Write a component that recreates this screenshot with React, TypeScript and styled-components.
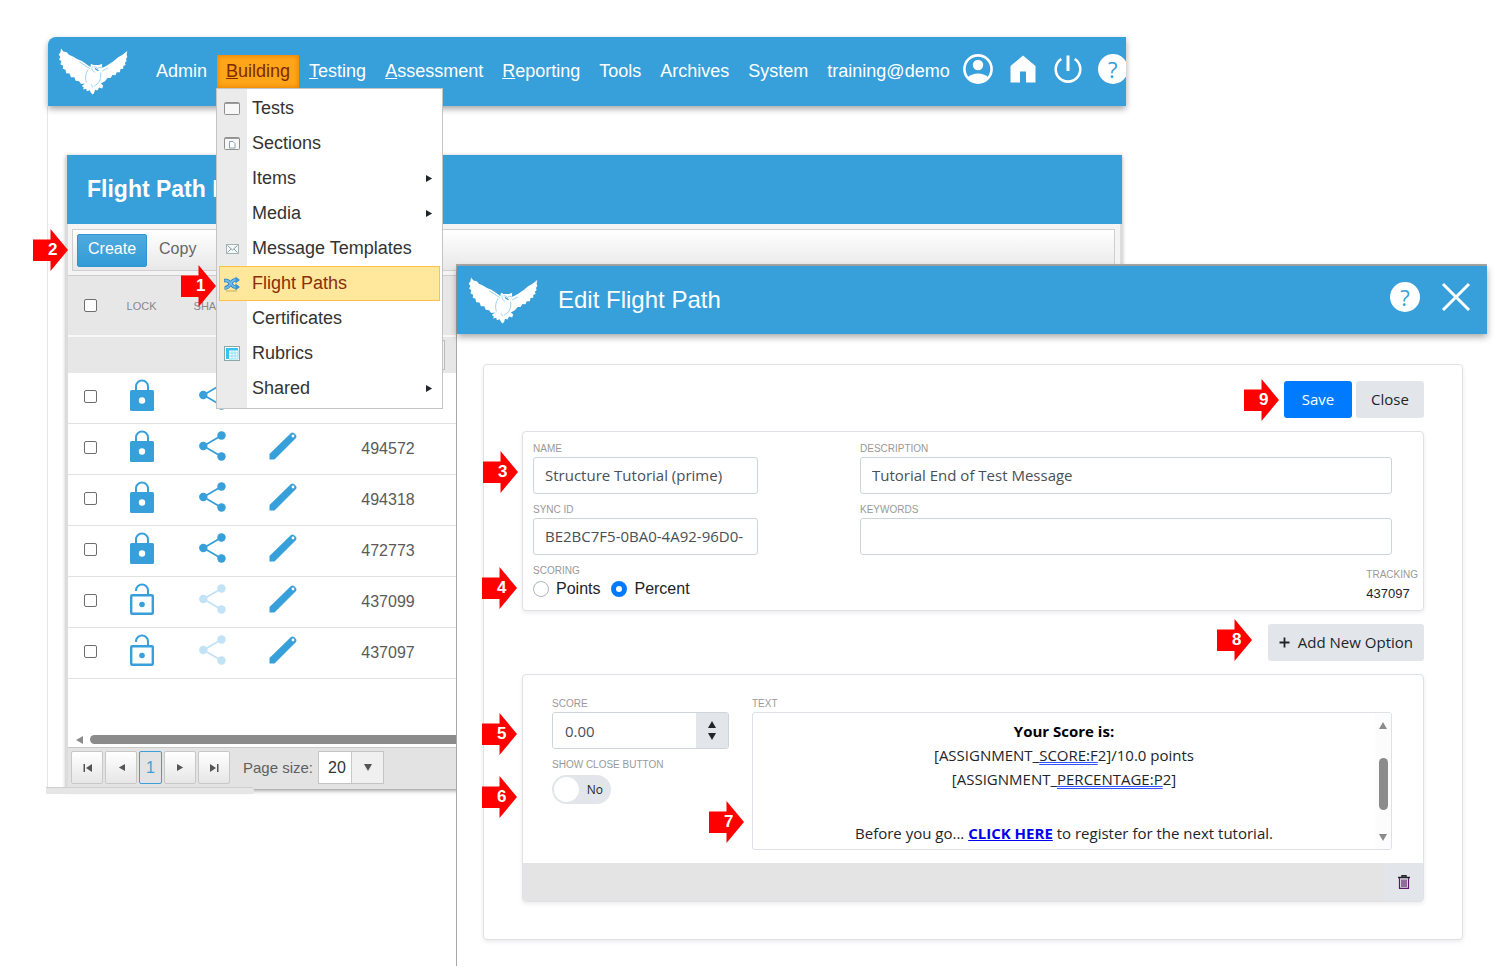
import React, { useState } from "react";
import styled, { createGlobalStyle, css } from "styled-components";

const BLUE = "#379fd9";
const ARIAL = `"Liberation Sans", Arial, sans-serif`;
const UI = `"Open Sans", "Noto Sans", sans-serif`;

const GlobalStyle = createGlobalStyle`
  *, *::before, *::after { box-sizing: border-box; }
  body { margin: 0; background: #fff; font-family: ${ARIAL}; color: #212529; }
  button, input, select { font: inherit; color: inherit; margin: 0; }
  button { cursor: pointer; }
`;

/* ---------- desktop ---------- */

const Desktop = styled.div`
  position: relative;
  min-height: 100vh;
  overflow: hidden;
`;

const MainWindow = styled.section`
  position: relative;
  margin: 37px 374px 0 48px;
`;

const TopBar = styled.header`
  position: relative;
  z-index: 2;
  display: flex;
  align-items: flex-start;
  height: 69px;
  padding: 11px 0 0 10px;
  background: ${BLUE};
  border-radius: 8px 0 0 0;
  box-shadow: 0 3px 6px rgba(0, 0, 0, 0.35);
`;

const Nav = styled.nav`
  display: flex;
  flex: none;
  gap: 1px;
  margin: 7px 0 0 19px;
`;

const NavItem = styled.div`
  position: relative;
`;

const NavLink = styled.a<{ $active?: boolean }>`
  display: block;
  height: 33px;
  padding: 0 9px;
  font-size: 18px;
  line-height: 32px;
  color: #fff;
  text-decoration: none;
  white-space: nowrap;
  ${(p) =>
    p.$active &&
    css`
      color: #7a2c00;
      background: #ffa51a;
      box-shadow: inset 0 0 4px 1px #e88400;
    `}
`;

const BarIcons = styled.div`
  display: flex;
  align-items: center;
  flex: 1;
  min-width: 0;
  gap: 15px;
  margin: 6px 0 0 4px;
  overflow: hidden;
`;

const IconButton = styled.button`
  flex: none;
  display: flex;
  align-items: center;
  justify-content: center;
  padding: 0;
  border: 0;
  background: none;
`;

const HelpButton = styled(IconButton)`
  width: 30px;
  height: 30px;
  border-radius: 50%;
  background: #fff;
  color: ${BLUE};
  font-family: "Open Sans", sans-serif;
  font-size: 22px;
  line-height: 30px;
`;

/* ---------- drop-down menu ---------- */

const Menu = styled.ul`
  position: absolute;
  top: 33px;
  left: -1px;
  width: 227px;
  margin: 0;
  padding: 2px;
  list-style: none;
  border: 1px solid #c4c4c4;
  background: linear-gradient(to right, #ebebeb 30px, #fff 30px);
`;

const MenuRow = styled.li<{ $active?: boolean }>`
  height: 35px;
  border: 1px solid ${(p) => (p.$active ? "#ffc04c" : "transparent")};
  background: ${(p) => (p.$active ? "#ffe79c" : "transparent")};
  a {
    display: flex;
    align-items: center;
    height: 33px;
    padding: 0 6px 0 3px;
    font-size: 18px;
    color: ${(p) => (p.$active ? "#8a2f0b" : "#333")};
    text-decoration: none;
    white-space: nowrap;
  }
`;

const MenuIcon = styled.span`
  display: flex;
  justify-content: center;
  align-items: center;
  flex: none;
  width: 18px;
  height: 18px;
  margin-right: 11px;
`;

const MenuText = styled.span`
  flex: 1;
`;

/* ---------- list panel ---------- */

const Content = styled.div`
  padding: 49px 4px 0 18px;
  box-shadow: -1px 0 0 #e6e6e6;
`;

const Panel = styled.section`
  border-left: 2px solid #dcdcdc;
  box-shadow: 0 1px 4px rgba(0, 0, 0, 0.35);
  background: #fff;
`;

const PanelTitle = styled.h1`
  height: 69px;
  margin: 0 0 0 -1px;
  padding: 0 20px;
  background: ${BLUE};
  color: #fff;
  font-size: 23px;
  line-height: 68px;
  white-space: nowrap;
`;

const Toolbar = styled.div`
  height: 52px;
  padding: 5px 5px 4px 4px;
  border-right: 2px solid #ddd;
  border-bottom: 1px solid #ccc;
  background: #f4f4f4;
`;

const ToolbarInner = styled.div`
  display: flex;
  align-items: center;
  gap: 1px;
  height: 42px;
  padding: 0 4px;
  border: 1px solid #cfcfcf;
  background: linear-gradient(#fff, #e8e8e8);
`;

const ToolButton = styled.button<{ $primary?: boolean }>`
  height: 33px;
  padding: 0 10px 2px;
  border: 1px solid ${(p) => (p.$primary ? "#2f95d0" : "transparent")};
  border-radius: 2px;
  background: ${(p) => (p.$primary ? "linear-gradient(#50abde, #329bd6)" : "none")};
  color: ${(p) => (p.$primary ? "#fff" : "#666")};
  font-size: 16px;
`;

const Grid = styled.table`
  width: 100%;
  table-layout: fixed;
  border-collapse: separate;
  border-spacing: 0;
  margin-bottom: 53px;
  col.check { width: 45px; }
  col.lock { width: 57px; }
  col.share { width: 85px; }
  col.edit { width: 56px; }
  col.id { width: 154px; }
  th, td { padding: 0; text-align: center; }
  thead th, thead td { background: #e7e7e7; }
  thead th {
    height: 61px;
    border-bottom: 2px solid #f8f8f8;
    color: #888;
    font-size: 11px;
    font-weight: 400;
  }
  thead td { height: 36px; }
  tbody td {
    height: 51px;
    border-bottom: 1px solid #e2e2e2;
    color: #5a5a5a;
    font-size: 16px;
  }
  svg { display: block; margin: 0 auto 6px; }
  tbody input { margin-bottom: 3px; }
`;

const RowCheck = styled.input`
  appearance: none;
  display: block;
  width: 13px;
  height: 13px;
  margin: 0 auto;
  border: 1px solid #6e6e6e;
  border-radius: 2px;
  background: #fff;
`;

const FilterInput = styled.input`
  width: 114px;
  height: 30px;
  border: 1px solid #bbb;
  background: #f2f2f2;
`;

const ScrollRow = styled.div`
  display: flex;
  align-items: center;
  gap: 7px;
  height: 15px;
  padding: 0 0 0 7px;
`;

const ScrollThumb = styled.div`
  flex: 1;
  height: 9px;
  border-radius: 5px;
  background: #8b8b8b;
`;

const Pager = styled.div`
  display: flex;
  align-items: center;
  gap: 2px;
  height: 43px;
  padding: 0 3px 2px;
  border-top: 1px solid #c8c8c8;
  border-bottom: 1px solid #b4b4b4;
  background: #e3e3e3;
  color: #606060;
  font-size: 15px;
`;

const PageButton = styled.button<{ $current?: boolean }>`
  display: flex;
  align-items: center;
  justify-content: center;
  width: ${(p) => (p.$current ? "23px" : "32px")};
  height: 33px;
  padding: 0;
  border: 1px solid ${(p) => (p.$current ? "#3c9fd8" : "#c8c8c8")};
  border-radius: 2px;
  background: ${(p) => (p.$current ? "#e3e3e3" : "linear-gradient(#fff, #e6e6e6)")};
  color: ${(p) => (p.$current ? "#3c9fd8" : "#555")};
  font-size: 16px;
`;

const PageSize = styled.label`
  display: flex;
  align-items: center;
  gap: 5px;
  margin-left: 11px;
  white-space: nowrap;
`;

const SelectBox = styled.span`
  position: relative;
  display: block;
  select {
    appearance: none;
    width: 66px;
    height: 33px;
    padding: 0 0 0 9px;
    border: 1px solid #c4c4c4;
    border-radius: 0;
    background: linear-gradient(to right, #fff 32px, #c8c8c8 32px, #c8c8c8 33px, #f0f0f0 33px);
    color: #333;
    font-size: 16px;
  }
  svg {
    position: absolute;
    top: 13px;
    right: 12px;
    pointer-events: none;
  }
`;

const StatusStrip = styled.div`
  position: absolute;
  left: -2px;
  bottom: -4px;
  width: 208px;
  height: 7px;
  border-top: 1px solid #cfcfcf;
  border-radius: 0 3px 0 0;
  background: #e6e6e6;
`;

/* ---------- edit window ---------- */

const EditWindow = styled.section`
  position: absolute;
  z-index: 3;
  top: 264px;
  left: 456px;
  right: 13px;
  border-top: 2px solid #a8a8a8;
  border-left: 1px solid #a8a8a8;
  background: #fff;
`;

const EditHeader = styled.header`
  display: flex;
  align-items: center;
  height: 68px;
  padding: 0 16px 0 11px;
  background: ${BLUE};
  color: #fff;
  box-shadow: 0 3px 7px rgba(0, 0, 0, 0.35);
  h2 {
    flex: 1;
    margin: 0 0 0 20px;
    font-size: 24px;
    font-weight: 400;
  }
`;

const HeaderActions = styled.div`
  display: flex;
  align-items: center;
  gap: 21px;
  padding-bottom: 6px;
`;

const EditBody = styled.div`
  padding: 30px 24px 26px 26px;
`;

const cardLook = css`
  border: 1px solid #dee2e6;
  border-radius: 4px;
  background: #fff;
  box-shadow: 0 2px 4px rgba(0, 0, 0, 0.08);
`;

const OuterCard = styled.form`
  ${cardLook}
  display: flex;
  flex-direction: column;
  gap: 13px;
  padding: 16px 38px 37px;
`;

const Actions = styled.div`
  position: relative;
  display: flex;
  justify-content: flex-end;
  gap: 4px;
`;

const Button = styled.button<{ $primary?: boolean }>`
  display: flex;
  align-items: center;
  justify-content: center;
  gap: 8px;
  min-width: 68px;
  height: 37px;
  padding: 0 11px 1px;
  border: 0;
  border-radius: 3px;
  background: ${(p) => (p.$primary ? "#007bff" : "#e2e6ea")};
  color: ${(p) => (p.$primary ? "#fff" : "#212529")};
  font-family: ${UI};
  font-size: 15px;
  white-space: nowrap;
`;

const FormCard = styled.div`
  ${cardLook}
  padding: 11px 5px 8px 10px;
`;

const FieldGrid = styled.div`
  display: grid;
  grid-template-columns: 225px 1fr;
  column-gap: 102px;
  row-gap: 10px;
  padding-right: 26px;
`;

const Field = styled.div`
  display: flex;
  flex-direction: column;
  gap: 2px;
  min-width: 0;
`;

const Caption = styled.label`
  color: #999;
  font-size: 10px;
  line-height: 12px;
  text-transform: uppercase;
`;

const TextInput = styled.input`
  width: 100%;
  min-width: 0;
  height: 37px;
  padding: 0 11px 2px;
  border: 1px solid #ced4da;
  border-radius: 3px;
  background: #fff;
  color: #495057;
  font-family: ${UI};
  font-size: 15px;
`;

const FormFoot = styled.div`
  display: flex;
  justify-content: space-between;
  margin-top: 10px;
`;

const Fieldset = styled.fieldset`
  margin: 0;
  padding: 0;
  border: 0;
  legend {
    padding: 0;
    margin-bottom: 2px;
    color: #999;
    font-size: 10px;
    line-height: 12px;
  }
`;

const Radios = styled.div`
  display: flex;
  gap: 11px;
`;

const RadioLabel = styled.label`
  display: flex;
  align-items: center;
  gap: 7px;
  font-size: 16px;
  line-height: 20px;
  input {
    appearance: none;
    width: 16px;
    height: 16px;
    border: 1px solid #adb5bd;
    border-radius: 50%;
    background: #fff;
  }
  input:checked {
    border: 5px solid #007bff;
  }
`;

const Tracking = styled.div`
  display: flex;
  flex-direction: column;
  gap: 5px;
  padding-top: 4px;
  output {
    font-size: 13px;
    line-height: 16px;
  }
`;

const OptionCard = styled.div`
  ${cardLook}
  overflow: hidden;
`;

const OptionBody = styled.div`
  display: grid;
  grid-template-columns: 177px 1fr;
  column-gap: 23px;
  padding: 23px 31px 13px 29px;
`;

const OptionLeft = styled.div`
  display: flex;
  flex-direction: column;
  gap: 10px;
`;

const NumberBox = styled.div`
  display: flex;
  height: 37px;
  border: 1px solid #ced4da;
  border-radius: 3px;
  overflow: hidden;
  input {
    flex: 1;
    min-width: 0;
    padding: 0 12px;
    border: 0;
    color: #495057;
    font-family: ${UI};
    font-size: 15px;
  }
`;

const Stepper = styled.div`
  display: flex;
  flex-direction: column;
  width: 32px;
  padding: 4px 0;
  background: #e2e6ea;
  button {
    flex: 1;
    display: flex;
    align-items: center;
    justify-content: center;
    padding: 0;
    border: 0;
    background: none;
  }
`;

const Toggle = styled.label`
  display: flex;
  align-items: center;
  justify-content: space-between;
  width: 59px;
  height: 29px;
  margin-top: 2px;
  padding: 0 8px 0 2px;
  border-radius: 15px;
  background: #e2e6ea;
  font-family: ${UI};
  font-size: 12px;
  input {
    appearance: none;
    width: 25px;
    height: 25px;
    border-radius: 50%;
    background: #fff;
  }
`;

const Editor = styled.div`
  display: flex;
  height: 138px;
  border: 1px solid #dee2e6;
  border-radius: 3px;
  overflow: hidden;
`;

const EditorText = styled.div`
  flex: 1;
  padding-top: 6px;
  font-family: ${UI};
  font-size: 15px;
  line-height: 24px;
  text-align: center;
  color: #212529;
  p { margin: 0 0 30px; }
  strong { color: #000; }
  a { color: #0000ee; font-weight: 700; }
`;

const Grammar = styled.span`
  text-decoration-line: underline;
  text-decoration-style: double;
  text-decoration-color: #3355ff;
  text-decoration-thickness: 1px;
  text-decoration-skip-ink: none;
`;

const EditorScroll = styled.div`
  display: flex;
  flex-direction: column;
  align-items: center;
  width: 16px;
  padding: 8px 0 7px;
  background: #fcfcfc;
  i {
    width: 9px;
    height: 52px;
    margin: 29px 0 auto;
    border-radius: 5px;
    background: #8b8b8b;
  }
`;

const OptionFoot = styled.div`
  display: flex;
  justify-content: flex-end;
  height: 38px;
  background: #e4e4e4;
  button { width: 38px; background: #e2e6ea; }
`;

/* ---------- numbered callouts ---------- */

const Callout = styled.span<{ $top: number; $left?: number; $right?: number }>`
  position: absolute;
  z-index: 5;
  top: ${(p) => p.$top}px;
  ${(p) => (p.$left !== undefined ? `left: ${p.$left}px;` : `right: ${p.$right}px;`)}
  width: 35px;
  height: 42px;
  padding-left: 15px;
  background: #f00;
  clip-path: polygon(0 25%, 50% 25%, 50% 0, 100% 50%, 50% 100%, 50% 76%, 0 76%);
  color: #fff;
  font-size: 17px;
  font-weight: 700;
  line-height: 42px;
`;

/* ---------- drawings ---------- */

const Owl = () => (
  <svg width="70" height="47" viewBox="24 30 206 138" aria-hidden="true">
    <path
      fill="#fff"
      d="M33 31 L40 40 L50 42 L56 50 L68 55 L80 62 L94 68 L106 76 L119 86 L121 76 L129 80 L145 80 L154 76 L153 88 L160 86 L174 78 L188 68 L200 58 L214 50 L222 43 L228 39 L226 50 L228 56 L224 62 L226 68 L221 73 L223 80 L216 83 L216 91 L208 92 L206 101 L197 101 L193 110 L184 109 L179 118 L170 118 L162 128 L150 134 L157 140 L154 149 L145 146 L140 155 L133 153 L130 163 L125 167 L120 160 L117 154 L109 157 L107 150 L98 152 L100 146 L94 142 L103 134 L92 136 L86 128 L76 126 L72 116 L62 116 L58 105 L48 104 L46 94 L38 91 L39 82 L31 78 L34 69 L27 64 L31 56 L26 49 L31 43 Z"
    />
    <g fill="none" stroke="#8fcaec" strokeWidth="2.5" strokeLinecap="round">
      <path d="M88 71 L106 83 L117 90" />
      <path d="M112 94 Q101 112 107 130" />
      <path d="M124 85 Q122 97 132 101" />
      <path d="M130 85 Q138 85 140 90 Q146 84 152 88" />
      <path d="M155 97 L170 89" />
      <path d="M150 103 Q152 122 144 132 L131 142" />
      <path d="M122 138 L126 145" />
      <path d="M134 91 L142 96" stroke={BLUE} strokeWidth="4" />
    </g>
  </svg>
);

const UserIcon = () => (
  <svg width="30" height="30" viewBox="0 0 30 30" aria-hidden="true">
    <circle cx="15" cy="15" r="13.6" fill="none" stroke="#fff" strokeWidth="2.6" />
    <circle cx="15" cy="11" r="5.2" fill="#fff" />
    <path d="M5 23 Q9 19.5 15 19.5 Q21 19.5 25 23 Q21 28.5 15 28.5 Q9 28.5 5 23Z" fill="#fff" />
  </svg>
);

const HomeIcon = () => (
  <svg width="30" height="30" viewBox="0 0 30 30" aria-hidden="true">
    <path d="M15 1.5 L27.5 12 V28.5 H18 V17.5 H12 V28.5 H2.5 V12 Z" fill="#fff" />
  </svg>
);

const PowerIcon = () => (
  <svg width="30" height="30" viewBox="0 0 30 30" aria-hidden="true">
    <g fill="none" stroke="#fff" strokeWidth="2.6">
      <path d="M15 1.5 V17" strokeWidth="3" />
      <path d="M8.3 5 A12.3 12.3 0 1 0 21.7 5" />
    </g>
  </svg>
);

const CloseIcon = () => (
  <svg width="30" height="30" viewBox="0 0 30 30" aria-hidden="true">
    <path d="M2 2 L28 28 M28 2 L2 28" stroke="#fff" strokeWidth="3" fill="none" />
  </svg>
);

const LockIcon = ({ open }: { open: boolean }) => (
  <svg width="24" height="32" viewBox="0 0 24 32" aria-hidden="true">
    {open ? (
      <>
        <path d="M6 8 V7.5 A6 6 0 0 1 18 7.5 V12" fill="none" stroke={BLUE} strokeWidth="2" />
        <rect x="1.2" y="12.2" width="21.6" height="18.6" rx="1" fill="none" stroke={BLUE} strokeWidth="2.4" />
        <circle cx="12" cy="21.5" r="2.8" fill={BLUE} />
      </>
    ) : (
      <>
        <path d="M6 12 V7.5 A6 6 0 0 1 18 7.5 V12" fill="none" stroke={BLUE} strokeWidth="2" />
        <rect y="11" width="24" height="21" rx="1.5" fill={BLUE} />
        <circle cx="12" cy="21.5" r="3.2" fill="#fff" />
      </>
    )}
  </svg>
);

const ShareIcon = ({ on }: { on: boolean }) => {
  const c = on ? BLUE : "#c2e2f5";
  return (
    <svg width="27" height="30" viewBox="0 0 27 30" aria-hidden="true">
      <path d="M22.5 4.5 L4.5 15 L22.5 25.5" fill="none" stroke={c} strokeWidth="1.8" />
      <circle cx="22.5" cy="4.5" r="4.2" fill={c} />
      <circle cx="4.3" cy="15" r="4.2" fill={c} />
      <circle cx="22.5" cy="25.5" r="4.2" fill={c} />
    </svg>
  );
};

const PencilIcon = () => (
  <svg width="28" height="28" viewBox="0 0 28 28" aria-hidden="true">
    <path d="M0.5 27.5 V22 L22 1 Q23.5 0 25 1 L27 3 Q28 4.5 27 6 L5.5 27.5 Z" fill={BLUE} />
    <circle cx="24" cy="4" r="1.4" fill="#fff" />
  </svg>
);

const TrashIcon = () => (
  <svg width="12" height="14" viewBox="0 0 12 14" aria-hidden="true">
    <path d="M4 2 V0.7 H8 V2 M0 2.5 H12" fill="none" stroke="#212529" strokeWidth="1.4" />
    <path d="M1.5 3 V13.3 H10.5 V3 M4 4.5 V12 M6 4.5 V12 M8 4.5 V12" fill="none" stroke="#5b1a66" strokeWidth="1.2" />
  </svg>
);

type Dir = "up" | "down" | "left" | "right";
const TRI: Record<Dir, string> = {
  up: "M0 8 L4 1 L8 8Z",
  down: "M0 0 L8 0 L4 7Z",
  left: "M8 0 V8 L1 4Z",
  right: "M0 0 V8 L7 4Z",
};
const Triangle = ({ dir, size = 8, color = "#212529" }: { dir: Dir; size?: number; color?: string }) => (
  <svg width={size} height={size} viewBox="0 0 8 8" aria-hidden="true">
    <path d={TRI[dir]} fill={color} />
  </svg>
);

const EndArrow = ({ flip }: { flip?: boolean }) => (
  <svg width="9" height="8" viewBox="0 0 9 8" aria-hidden="true">
    <path d={flip ? "M0 0 V8 L6 4Z M7 0 H8.5 V8 H7Z" : "M9 0 V8 L3 4Z M0.5 0 H2 V8 H0.5Z"} fill="#555" />
  </svg>
);

const WindowGlyph = ({ page }: { page?: boolean }) => (
  <svg width="16" height="13" viewBox="0 0 16 13" aria-hidden="true">
    <rect x="0.5" y="0.5" width="15" height="12" rx="1" fill="#f7f7f7" stroke="#8f9090" />
    <path d="M1 1.5 H15" stroke="#9a9a9a" />
    {page && <path d="M5.5 4.5 H9 L11 6.5 V11 H5.5Z" fill="#fff" stroke="#87a5ad" />}
  </svg>
);

const MailGlyph = () => (
  <svg width="13" height="10" viewBox="0 0 13 10" aria-hidden="true">
    <rect x="0.5" y="0.5" width="12" height="9" fill="#f4f8f8" stroke="#a3b3b3" />
    <path d="M1.5 1.5 L6.5 6 L11.5 1.5 M1.5 8.5 L5 5 M11.5 8.5 L8 5" fill="none" stroke="#87a09f" />
  </svg>
);

const ShuffleGlyph = () => (
  <svg width="16" height="16" viewBox="0 0 16 16" aria-hidden="true">
    <path d="M2 15 H13" stroke="#d8bd72" strokeWidth="1.4" />
    <g fill="none" stroke="#2f7fc0" strokeWidth="3.4">
      <path d="M0 4.5 H2 C7 4.5 7 11 11 11 H12.5" />
      <path d="M0.5 12 C7 12 6 4 11 4 H12.5" />
    </g>
    <g fill="none" stroke="#6fbcf0" strokeWidth="1.8">
      <path d="M0.5 4.5 H2 C7 4.5 7 11 11 11 H13" />
      <path d="M1 12 C7 12 6 4 11 4 H13" />
    </g>
    <path d="M11.5 0.5 L16 4 L11.5 7.5Z M11.5 7.5 L16 11 L11.5 14.5Z" fill="#3d93d3" />
  </svg>
);

const GridGlyph = () => (
  <svg width="16" height="15" viewBox="0 0 16 15" aria-hidden="true">
    <rect x="0.5" y="0.5" width="15" height="14" fill="#fff" stroke="#8fa5a8" />
    <path d="M2 2 H14 V4.5 H5 V13 H2Z" fill="#35c3f2" />
    <path d="M5 7 H14 M5 10 H14 M8 4.5 V13 M11 4.5 V13 M5 13 H14 M14 4 V13" stroke="#8edcf2" />
  </svg>
);

/* ---------- data ---------- */

const NAV = [
  { text: "Admin" },
  { text: "Building", key: true, active: true },
  { text: "Testing", key: true },
  { text: "Assessment", key: true },
  { text: "Reporting", key: true },
  { text: "Tools" },
  { text: "Archives" },
  { text: "System" },
  { text: "training@demo" },
];

const MENU: { text: string; icon?: React.ReactNode; sub?: boolean; active?: boolean }[] = [
  { text: "Tests", icon: <WindowGlyph /> },
  { text: "Sections", icon: <WindowGlyph page /> },
  { text: "Items", sub: true },
  { text: "Media", sub: true },
  { text: "Message Templates", icon: <MailGlyph /> },
  { text: "Flight Paths", icon: <ShuffleGlyph />, active: true },
  { text: "Certificates" },
  { text: "Rubrics", icon: <GridGlyph /> },
  { text: "Shared", sub: true },
];

const ROWS = [
  { id: "", locked: true },
  { id: "494572", locked: true },
  { id: "494318", locked: true },
  { id: "472773", locked: true },
  { id: "437099", locked: false },
  { id: "437097", locked: false },
];

function BuildingMenu() {
  return (
    <Menu>
      {MENU.map((m) => (
        <MenuRow key={m.text} $active={m.active}>
          <a href="#menu">
            <MenuIcon>{m.icon}</MenuIcon>
            <MenuText>{m.text}</MenuText>
            {m.sub && <Triangle dir="right" size={7} />}
          </a>
        </MenuRow>
      ))}
    </Menu>
  );
}

function FlightPathList() {
  return (
    <Panel>
      <PanelTitle>Flight Path M</PanelTitle>
      <Toolbar>
        <ToolbarInner>
          <ToolButton $primary>Create</ToolButton>
          <ToolButton>Copy</ToolButton>
        </ToolbarInner>
      </Toolbar>
      <Grid>
        <colgroup>
          <col className="check" />
          <col className="lock" />
          <col className="share" />
          <col className="edit" />
          <col className="id" />
          <col />
        </colgroup>
        <thead>
          <tr>
            <th><RowCheck type="checkbox" aria-label="Select all" /></th>
            <th>LOCK</th>
            <th>SHARE</th>
            <th />
            <th />
            <th />
          </tr>
          <tr>
            <td /><td /><td /><td />
            <td><FilterInput aria-label="Filter by ID" /></td>
            <td />
          </tr>
        </thead>
        <tbody>
          {ROWS.map((r) => (
            <tr key={r.id}>
              <td><RowCheck type="checkbox" aria-label={`Select ${r.id}`} /></td>
              <td><LockIcon open={!r.locked} /></td>
              <td><ShareIcon on={r.locked} /></td>
              <td><PencilIcon /></td>
              <td>{r.id}</td>
              <td />
            </tr>
          ))}
        </tbody>
      </Grid>
      <ScrollRow>
        <Triangle dir="left" color="#8b8b8b" />
        <ScrollThumb />
      </ScrollRow>
      <Pager>
        <PageButton aria-label="First page"><EndArrow /></PageButton>
        <PageButton aria-label="Previous page"><Triangle dir="left" size={7} color="#555" /></PageButton>
        <PageButton $current>1</PageButton>
        <PageButton aria-label="Next page"><Triangle dir="right" size={7} color="#555" /></PageButton>
        <PageButton aria-label="Last page"><EndArrow flip /></PageButton>
        <PageSize>
          Page size:
          <SelectBox>
            <select defaultValue="20">
              <option>20</option>
              <option>50</option>
            </select>
            <Triangle dir="down" color="#555" />
          </SelectBox>
        </PageSize>
      </Pager>
    </Panel>
  );
}

function EditForm() {
  const [mode, setMode] = useState("Percent");
  return (
    <OuterCard onSubmit={(e) => e.preventDefault()}>
      <Actions>
        <Callout $top={-2} $right={145}>9</Callout>
        <Button $primary>Save</Button>
        <Button type="button">Close</Button>
      </Actions>

      <FormCard>
        <FieldGrid>
          <Field>
            <Caption htmlFor="name">Name</Caption>
            <TextInput id="name" defaultValue="Structure Tutorial (prime)" />
          </Field>
          <Field>
            <Caption htmlFor="description">Description</Caption>
            <TextInput id="description" defaultValue="Tutorial End of Test Message" />
          </Field>
          <Field>
            <Caption htmlFor="sync">Sync ID</Caption>
            <TextInput id="sync" defaultValue="BE2BC7F5-0BA0-4A92-96D0-" />
          </Field>
          <Field>
            <Caption htmlFor="keywords">Keywords</Caption>
            <TextInput id="keywords" />
          </Field>
        </FieldGrid>
        <FormFoot>
          <Fieldset>
            <legend>SCORING</legend>
            <Radios>
              {["Points", "Percent"].map((m) => (
                <RadioLabel key={m}>
                  <input type="radio" name="scoring" checked={mode === m} onChange={() => setMode(m)} />
                  {m}
                </RadioLabel>
              ))}
            </Radios>
          </Fieldset>
          <Tracking>
            <Caption htmlFor="tracking">Tracking</Caption>
            <output id="tracking">437097</output>
          </Tracking>
        </FormFoot>
      </FormCard>

      <Actions>
        <Callout $top={-5} $right={172}>8</Callout>
        <Button type="button">
          <svg width="11" height="11" viewBox="0 0 11 11" aria-hidden="true">
            <path d="M5.5 0.5 V10.5 M0.5 5.5 H10.5" stroke="#212529" strokeWidth="1.8" />
          </svg>
          Add New Option
        </Button>
      </Actions>

      <OptionCard>
        <OptionBody>
          <OptionLeft>
            <Field>
              <Caption htmlFor="score">Score</Caption>
              <NumberBox>
                <input id="score" defaultValue="0.00" />
                <Stepper>
                  <button type="button" aria-label="Increase"><Triangle dir="up" /></button>
                  <button type="button" aria-label="Decrease"><Triangle dir="down" /></button>
                </Stepper>
              </NumberBox>
            </Field>
            <Field>
              <Caption htmlFor="showclose">Show Close Button</Caption>
              <Toggle>
                <input id="showclose" type="checkbox" />
                No
              </Toggle>
            </Field>
          </OptionLeft>
          <Field>
            <Caption as="span" id="text-label">Text</Caption>
            <Editor>
              <EditorText role="textbox" aria-multiline="true" aria-labelledby="text-label">
                <p>
                  <strong>Your Score is:</strong>
                  <br />
                  [ASSIGNMENT_<Grammar>SCORE:F</Grammar>2]/10.0 points
                  <br />
                  [ASSIGNMENT_<Grammar>PERCENTAGE:P</Grammar>2]
                </p>
                <p>
                  Before you go... <a href="#register">CLICK HERE</a> to register for the next tutorial.
                </p>
              </EditorText>
              <EditorScroll>
                <Triangle dir="up" color="#8b8b8b" />
                <i />
                <Triangle dir="down" color="#8b8b8b" />
              </EditorScroll>
            </Editor>
          </Field>
        </OptionBody>
        <OptionFoot>
          <IconButton type="button" aria-label="Delete option"><TrashIcon /></IconButton>
        </OptionFoot>
      </OptionCard>
    </OuterCard>
  );
}

export default function App() {
  return (
    <Desktop>
      <GlobalStyle />
      <MainWindow>
        <TopBar>
          <Owl />
          <Nav>
            {NAV.map((n) => (
              <NavItem key={n.text}>
                <NavLink href="#nav" $active={n.active}>
                  {n.key ? (
                    <>
                      <u>{n.text[0]}</u>
                      {n.text.slice(1)}
                    </>
                  ) : (
                    n.text
                  )}
                </NavLink>
                {n.active && <BuildingMenu />}
              </NavItem>
            ))}
          </Nav>
          <BarIcons>
            <IconButton aria-label="Account"><UserIcon /></IconButton>
            <IconButton aria-label="Home"><HomeIcon /></IconButton>
            <IconButton aria-label="Log out"><PowerIcon /></IconButton>
            <HelpButton>?</HelpButton>
          </BarIcons>
        </TopBar>
        <Content>
          <FlightPathList />
        </Content>
        <StatusStrip />
      </MainWindow>
      <Callout $top={229} $left={33}>2</Callout>
      <Callout $top={265} $left={181}>1</Callout>

      <EditWindow>
        <EditHeader>
          <Owl />
          <h2>Edit Flight Path</h2>
          <HeaderActions>
            <HelpButton>?</HelpButton>
            <IconButton aria-label="Close window"><CloseIcon /></IconButton>
          </HeaderActions>
        </EditHeader>
        <EditBody>
          <EditForm />
        </EditBody>
        <Callout $top={185} $left={26}>3</Callout>
        <Callout $top={301} $left={25}>4</Callout>
        <Callout $top={447} $left={25}>5</Callout>
        <Callout $top={510} $left={25}>6</Callout>
        <Callout $top={535} $left={252}>7</Callout>
      </EditWindow>
    </Desktop>
  );
}
